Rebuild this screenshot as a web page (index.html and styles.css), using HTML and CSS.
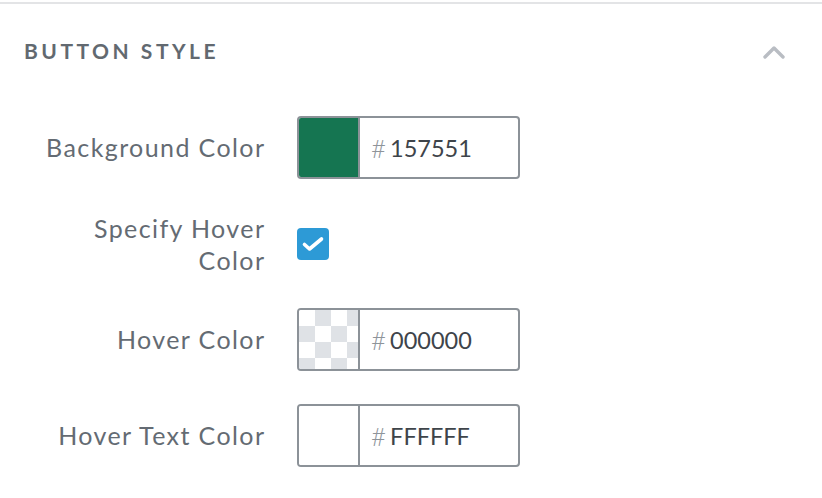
FILE: index.html
```html
<!DOCTYPE html>
<html>
<head>
<meta charset="utf-8">
<link rel="stylesheet" href="styles.css">
</head>
<body>
<div class="panel">
  <div class="topline"></div>
  <div class="header">
    <h2 class="title">BUTTON STYLE</h2>
    <svg class="chevron" width="22" height="14" viewBox="0 0 22 14"><polyline points="2,12 11,3 20,12" fill="none" stroke="#b9bdc3" stroke-width="3.4" stroke-linecap="round" stroke-linejoin="round"/></svg>
  </div>
  <div class="form">
    <div class="label">Background Color</div>
    <div class="field">
      <div class="colorbox">
        <div class="swatch swatch-green"></div>
        <div class="value"><span class="hash">#</span>157551</div>
      </div>
    </div>

    <div class="label label-two">Specify Hover<br>Color</div>
    <div class="field">
      <div class="checkbox">
        <svg width="32" height="32" viewBox="0 0 32 32"><polyline points="7.5,16.5 12.5,21 24.5,11" fill="none" stroke="#fff" stroke-width="3.6" stroke-linecap="round" stroke-linejoin="round"/></svg>
      </div>
    </div>

    <div class="label">Hover Color</div>
    <div class="field">
      <div class="colorbox">
        <div class="swatch swatch-checker"></div>
        <div class="value"><span class="hash">#</span>000000</div>
      </div>
    </div>

    <div class="label">Hover Text Color</div>
    <div class="field">
      <div class="colorbox">
        <div class="swatch swatch-white"></div>
        <div class="value"><span class="hash">#</span>FFFFFF</div>
      </div>
    </div>
  </div>
</div>
</body>
</html>
```
FILE: styles.css
```css
* { box-sizing: border-box; }
html, body { margin: 0; padding: 0; background: #fff; }
body { font-family: Lato, "Open Sans", sans-serif; color: #646b73; }
.panel { width: 822px; height: 498px; overflow: hidden; }
.topline { margin-top: 2px; height: 2px; background: #e3e4e6; }
.header {
  display: flex; align-items: center; justify-content: space-between;
  height: 90px; padding: 0 37px 0 24px; margin-top: 1px;
}
.title {
  margin: 0; font-size: 21px; font-weight: 700; letter-spacing: 3.5px;
  color: #626970;
}
.chevron { display: block; margin-top: 4px; }
.form {
  display: grid; grid-template-columns: 264px 223px; column-gap: 33px;
  row-gap: 33px; margin-top: 21px;
}
.label {
  text-align: right; font-size: 25px; line-height: 31px; color: #646b73;
  letter-spacing: 1.4px; margin-right: -1.4px;
  height: 63px; display: flex; align-items: center; justify-content: flex-end;
}
.label-two { line-height: 32px; }
.field { height: 63px; display: flex; align-items: center; }
.colorbox {
  width: 223px; height: 63px; border: 2px solid #8c9298; border-radius: 4px;
  display: flex; overflow: hidden;
}
.swatch { width: 61px; flex: none; border-right: 2px solid #8c9298; }
.swatch-green { background: #157551; }
.swatch-white { background: #fff; }
.swatch-checker {
  background: repeating-conic-gradient(#dfe2e6 0 25%, #fff 0 50%) 0 0 / 32px 32px;
}
.value {
  display: flex; align-items: center; padding-left: 11px;
  font-size: 23.5px; color: #3e444a; letter-spacing: 0px;
}
.hash { color: #8e949a; font-weight: 300; font-size: 26px; margin-right: 4px; }
.checkbox {
  width: 32px; height: 32px; border-radius: 4px; background: #2d9ad6;
  display: flex; align-items: center; justify-content: center;
}
.checkbox svg { display: block; }
```
